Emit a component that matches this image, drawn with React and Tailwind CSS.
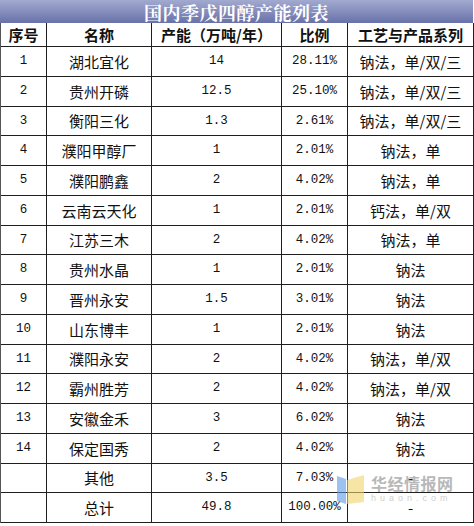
import React from "react";

const rows = [
  ["1", "湖北宜化", "14", "28.11%", "钠法，单/双/三"],
  ["2", "贵州开磷", "12.5", "25.10%", "钠法，单/双/三"],
  ["3", "衡阳三化", "1.3", "2.61%", "钠法，单/双/三"],
  ["4", "濮阳甲醇厂", "1", "2.01%", "钠法，单"],
  ["5", "濮阳鹏鑫", "2", "4.02%", "钠法，单"],
  ["6", "云南云天化", "1", "2.01%", "钙法，单/双"],
  ["7", "江苏三木", "2", "4.02%", "钠法，单"],
  ["8", "贵州水晶", "1", "2.01%", "钠法"],
  ["9", "晋州永安", "1.5", "3.01%", "钠法"],
  ["10", "山东博丰", "1", "2.01%", "钠法"],
  ["11", "濮阳永安", "2", "4.02%", "钠法，单/双"],
  ["12", "霸州胜芳", "2", "4.02%", "钠法，单/双"],
  ["13", "安徽金禾", "3", "6.02%", "钠法"],
  ["14", "保定国秀", "2", "4.02%", "钠法"],
  ["", "其他", "3.5", "7.03%", "-"],
  ["", "总计", "49.8", "100.00%", "-"],
];

const cjk = "font-['Noto_Sans_CJK_SC',sans-serif]";
const mono = "font-['Liberation_Mono','Noto_Sans_CJK_SC',monospace]";
const cell = "flex items-center justify-center border-r-[1.5px] border-b-[1.5px] border-[#1f1f1f] text-[#111]";

export default function App() {
  return (
    <div className="relative w-[474px] h-[526px] bg-white overflow-hidden">
      <div className="w-[473px] h-[23px] flex items-center justify-center bg-gradient-to-b from-[#a3aad0] to-[#6872a8] text-white text-[18px] font-bold font-['Noto_Serif_CJK_SC','Noto_Sans_CJK_SC',serif] tracking-[0.5px] leading-none">
        国内季戊四醇产能列表
      </div>
      <div className="grid grid-cols-[46px_105px_130px_66px_126px] border-l border-[#555] w-[474px]">
        {["序号", "名称", "产能（万吨/年）", "比例", "工艺与产品系列"].map((h, i) => (
          <div
            key={i}
            className={`${cell} ${cjk} h-[24px] text-[15px] font-bold leading-none border-b-2`}
          >
            {h}
          </div>
        ))}
        {rows.map((r, ri) => (
          <React.Fragment key={ri}>
            {r.map((c, ci) => (
              <div
                key={ci}
                className={`${cell} h-[29.75px] ${
                  ci === 0 || ci === 2 || ci === 3 ? `${mono} text-[12.5px]` : `${cjk} text-[15px]`
                } ${ri === rows.length - 1 ? "border-b-2" : ""} leading-none`}
              >
                {c}
              </div>
            ))}
          </React.Fragment>
        ))}
      </div>

      {/* watermark */}
      <div className="absolute left-[335px] top-[474px] flex items-start gap-[6px] opacity-60 pointer-events-none">
        <svg width="30" height="32" viewBox="0 0 30 32">
          <polygon points="2,2 11,5 11,30 2,27" fill="#5a9ae8" />
          <polygon points="12,6 29,1 29,28 12,30" fill="#f3d46a" />
        </svg>
        <div className="flex flex-col items-start">
          <span className={`${cjk} text-[16px] leading-[18px] text-[#8a8a8a] font-bold tracking-[0.5px]`}>
            华经情报网
          </span>
          <span className="font-['Liberation_Sans',sans-serif] text-[9px] leading-[12px] text-[#b0b0b0] tracking-[4px]">
            huaon.com
          </span>
        </div>
      </div>
    </div>
  );
}
